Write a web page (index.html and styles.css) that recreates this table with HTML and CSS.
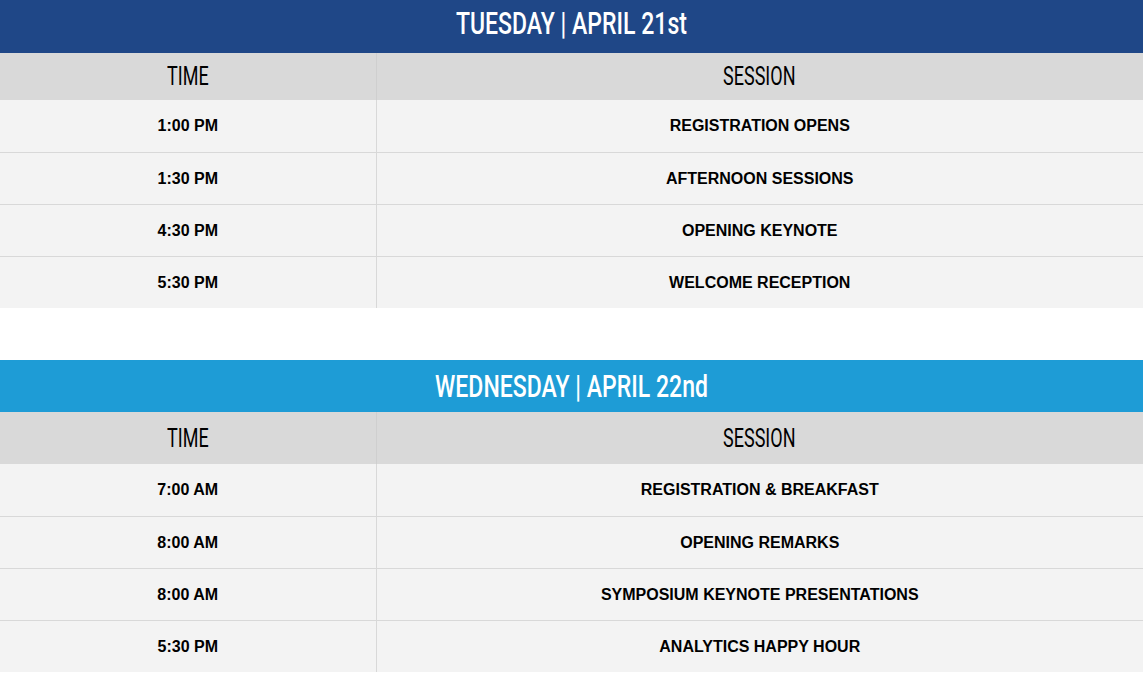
FILE: index.html
```html
<!DOCTYPE html>
<html>
<head>
<meta charset="utf-8">
<link rel="stylesheet" href="styles.css">
</head>
<body>
<div class="page">
  <table class="sched sched-tue">
    <colgroup><col class="col-time"><col class="col-session"></colgroup>
    <thead>
      <tr><th colspan="2" class="day day-tue"><span class="cond">TUESDAY | APRIL 21st</span></th></tr>
      <tr class="cols"><th class="c-time"><span class="cond">TIME</span></th><th class="c-session"><span class="cond">SESSION</span></th></tr>
    </thead>
    <tbody>
      <tr><td>1:00 PM</td><td>REGISTRATION OPENS</td></tr>
      <tr><td>1:30 PM</td><td>AFTERNOON SESSIONS</td></tr>
      <tr><td>4:30 PM</td><td>OPENING KEYNOTE</td></tr>
      <tr><td>5:30 PM</td><td>WELCOME RECEPTION</td></tr>
    </tbody>
  </table>
  <div class="spacer"></div>
  <table class="sched sched-wed">
    <colgroup><col class="col-time"><col class="col-session"></colgroup>
    <thead>
      <tr><th colspan="2" class="day day-wed"><span class="cond">WEDNESDAY | APRIL 22nd</span></th></tr>
      <tr class="cols"><th class="c-time"><span class="cond">TIME</span></th><th class="c-session"><span class="cond">SESSION</span></th></tr>
    </thead>
    <tbody>
      <tr><td>7:00 AM</td><td>REGISTRATION &amp; BREAKFAST</td></tr>
      <tr><td>8:00 AM</td><td>OPENING REMARKS</td></tr>
      <tr><td>8:00 AM</td><td>SYMPOSIUM KEYNOTE PRESENTATIONS</td></tr>
      <tr><td>5:30 PM</td><td>ANALYTICS HAPPY HOUR</td></tr>
    </tbody>
  </table>
</div>
</body>
</html>
```
FILE: styles.css
```css
html, body {
  margin: 0;
  padding: 0;
  background: #ffffff;
}
.page {
  width: 1143px;
}
.sched {
  width: 1143px;
  border-collapse: collapse;
  table-layout: fixed;
}
.col-time {
  width: 376px;
}
.cond {
  display: inline-block;
  transform: scaleX(0.72);
  white-space: nowrap;
}
.day {
  height: 52px;
  padding: 0;
  color: #ffffff;
  font-family: Roboto, "Liberation Sans", sans-serif;
  font-weight: 500;
  font-size: 32px;
  line-height: 1;
  text-align: center;
  vertical-align: middle;
}
.day-tue {
  background: #1f4787;
  height: 45px;
  padding-bottom: 8px;
}
.day-wed {
  background: #1e9cd6;
}
.cols th {
  height: 47px;
  padding: 0;
  background: #d9d9d9;
  color: #000000;
  font-family: Roboto, "Liberation Sans", sans-serif;
  font-weight: normal;
  font-size: 25px;
  line-height: 1;
  text-align: center;
  vertical-align: middle;
}
.sched-wed .cols th {
  height: 52px;
}
.cols .c-time {
  border-right: 1px solid #cfcfcf;
}
.sched td {
  height: 51px;
  padding: 0;
  background: #f3f3f3;
  color: #000000;
  font-family: "Liberation Sans", Arial, sans-serif;
  font-weight: bold;
  font-size: 16px;
  text-align: center;
  vertical-align: middle;
  border-top: 1px solid #d8d8d8;
}
.sched tbody tr:first-child td {
  border-top: none;
  height: 52px;
}
.sched td:first-child {
  border-right: 1px solid #d8d8d8;
}
.spacer {
  height: 52px;
}
```
